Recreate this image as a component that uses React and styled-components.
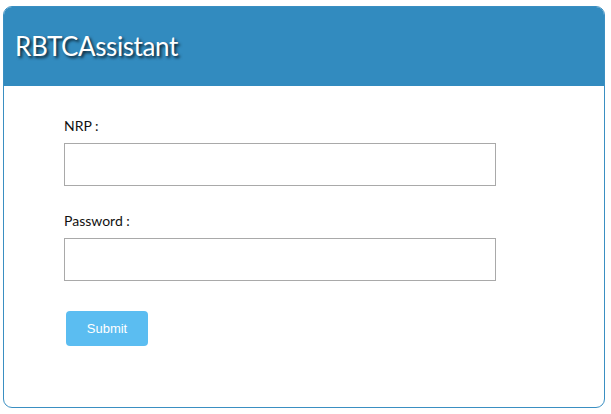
import styled, { createGlobalStyle } from 'styled-components';

const GlobalStyle = createGlobalStyle`
  body {
    margin: 0;
    background: #ffffff;
    font-family: "Lato", "DejaVu Sans", sans-serif;
  }
`;

const Page = styled.div`
  padding: 6px 6px 0 3px;
`;

const Card = styled.div`
  width: 602px;
  height: 402px;
  box-sizing: border-box;
  border: 1px solid #3a8fc2;
  border-radius: 9px;
  overflow: hidden;
  background: #fff;
`;

const Header = styled.div`
  height: 79px;
  background: #328bbf;
  display: flex;
  align-items: center;
  padding-left: 11px;
`;

const Title = styled.h1`
  margin: 0 0 2px 0;
  font-family: "Lato", sans-serif;
  font-weight: 400;
  font-size: 26px;
  letter-spacing: -0.4px;
  color: #ffffff;
  text-shadow: 2px 2px 3px rgba(0, 0, 0, 0.75);
`;

const Form = styled.form`
  padding: 31px 0 0 60px;
  display: flex;
  flex-direction: column;
  align-items: flex-start;
`;

const Label = styled.label`
  font-size: 14px;
  color: #111;
  margin-bottom: 9px;
  line-height: 17px;
`;

const Input = styled.input`
  width: 432px;
  height: 43px;
  box-sizing: border-box;
  border: 1px solid #a9a9a9;
  margin: 0 0 ${(p) => p.$gap}px 0;
  padding: 0 8px;
  font-size: 14px;
`;

const Submit = styled.button`
  margin-left: 2px;
  width: 82px;
  height: 35px;
  border: none;
  border-radius: 4px;
  background: #5bbdf1;
  color: #fff;
  font-family: "Liberation Sans", Arial, sans-serif;
  font-size: 13px;
`;

const App = function () {
  return (
    <Page>
      <GlobalStyle />
      <Card>
        <Header>
          <Title>RBTCAssistant</Title>
        </Header>
        <Form onSubmit={(e) => e.preventDefault()}>
          <Label>NRP :</Label>
          <Input type="text" $gap={26} />
          <Label>Password :</Label>
          <Input type="password" $gap={30} />
          <Submit type="submit">Submit</Submit>
        </Form>
      </Card>
    </Page>
  );
};

export default App;
